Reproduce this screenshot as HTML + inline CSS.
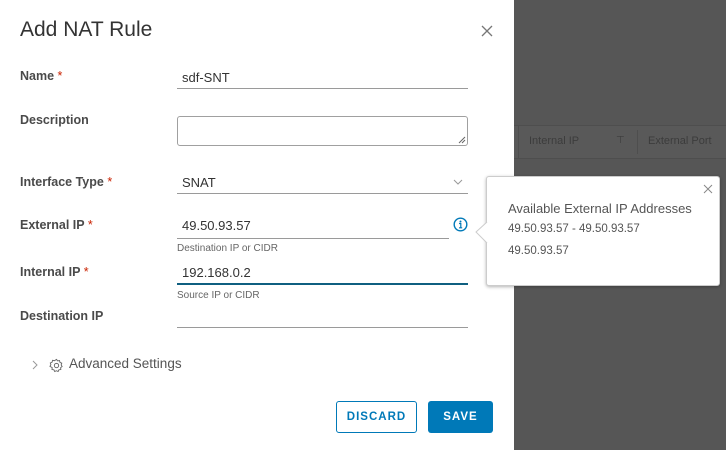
<!DOCTYPE html>
<html><head><style>
*{margin:0;padding:0;box-sizing:border-box}
body{width:726px;height:450px;overflow:hidden;position:relative;background:#565656;font-family:"Liberation Sans",sans-serif;color:#333}
.modal{position:absolute;left:0;top:0;width:514px;height:450px;background:#fff}
.abs{position:absolute}
.lbl{position:absolute;left:20px;font-size:12.5px;font-weight:bold;color:#4a4a4a}
.req{color:#c92100;font-weight:normal}
.val{position:absolute;left:182px;font-size:13px;color:#333}
.line{position:absolute;left:177px;width:291px;height:1px;background:#9a9a9a}
.help{position:absolute;left:177px;font-size:10px;color:#666}
</style></head><body>
<div class="abs" style="left:514px;top:125px;width:212px;height:34px;background:#595959;border-top:1px solid #4e4e4e;border-bottom:1px solid #4e4e4e"></div>
<div class="abs" style="left:518px;top:126px;width:1px;height:32px;background:#4e4e4e"></div>
<div class="abs" style="left:637px;top:130px;width:1px;height:24px;background:#4e4e4e"></div>
<div class="abs" style="left:529px;top:135px;font-size:11px;color:#3c3c3c">Internal IP</div>
<div class="abs" style="left:616px;top:135px;font-size:10px;color:#3c3c3c">⊤</div>
<div class="abs" style="left:648px;top:135px;font-size:11px;color:#3c3c3c">External Port</div>

<div class="modal">
<div class="abs" style="left:20px;top:18px;font-size:21px;color:#333">Add NAT Rule</div>
<svg class="abs" style="left:480px;top:24px" width="14" height="14"><path d="M2 2L12 12M12 2L2 12" stroke="#777" stroke-width="1.3"/></svg>

<div class="lbl" style="top:69px">Name <span class="req">*</span></div>
<div class="val" style="top:70px">sdf-SNT</div>
<div class="line" style="top:88px"></div>

<div class="lbl" style="top:113px">Description</div>
<div class="abs" style="left:177px;top:116px;width:291px;height:30px;border:1px solid #a0a0a0;border-radius:3px"></div>
<svg class="abs" style="left:458px;top:136px" width="8" height="8"><path d="M1 7L7 1M4 7L7 4" stroke="#666" stroke-width="1"/></svg>

<div class="lbl" style="top:175px">Interface Type <span class="req">*</span></div>
<div class="val" style="top:175px">SNAT</div>
<svg class="abs" style="left:453px;top:179px" width="10" height="6"><path d="M1 1L5 5L9 1" stroke="#999" fill="none"/></svg>
<div class="line" style="top:193px"></div>

<div class="lbl" style="top:218px">External IP <span class="req">*</span></div>
<div class="val" style="top:218px">49.50.93.57</div>
<div class="line" style="top:238px;width:272px"></div>
<div class="help" style="top:243px">Destination IP or CIDR</div>
<svg class="abs" style="left:453px;top:217px" width="15" height="15"><circle cx="7.5" cy="7.5" r="6.3" fill="none" stroke="#0079b8" stroke-width="1.4"/><circle cx="7.5" cy="4.5" r="1" fill="#0079b8"/><path d="M6 6.5H7.8V10.5M6 10.8H9.2" stroke="#0079b8" stroke-width="1.2" fill="none"/></svg>

<div class="lbl" style="top:265px">Internal IP <span class="req">*</span></div>
<div class="val" style="top:265px">192.168.0.2</div>
<div class="line" style="top:283px;height:2px;background:#0f5f80"></div>
<div class="help" style="top:290px">Source IP or CIDR</div>

<div class="lbl" style="top:309px">Destination IP</div>
<div class="line" style="top:327px"></div>

<svg class="abs" style="left:31px;top:360px" width="8" height="10"><path d="M2 1L6 5L2 9" stroke="#999" fill="none"/></svg>
<svg class="abs" style="left:49px;top:358px" width="15" height="15" viewBox="0 0 16 16"><path d="M8 1.5l1.2 1.6 2-.4.5 2 1.9.8-.6 1.9 1 1.7-1.6 1.2.2 2-2 .3-.9 1.8-1.8-.8-1.8.8-.9-1.8-2-.3.2-2L1 8.9l1-1.7-.6-1.9 1.9-.8.5-2 2 .4z" fill="none" stroke="#666" stroke-width="1"/><circle cx="8" cy="8" r="2.3" fill="none" stroke="#666"/></svg>
<div class="abs" style="left:69px;top:356px;font-size:13.5px;color:#555">Advanced Settings</div>

<div class="abs" style="left:336px;top:401px;width:81px;height:32px;border:1px solid #0079b8;border-radius:3px;color:#0079b8;font-size:11.5px;font-weight:bold;letter-spacing:1px;text-align:center;line-height:30px">DISCARD</div>
<div class="abs" style="left:428px;top:401px;width:65px;height:32px;background:#0079b8;border-radius:3px;color:#fff;font-size:11.5px;font-weight:bold;letter-spacing:1px;text-align:center;line-height:32px">SAVE</div>
</div>

<div class="abs" style="left:486px;top:176px;width:234px;height:110px;background:#fff;border:1px solid #ccc;border-radius:3px;box-shadow:0 1px 3px rgba(0,0,0,.3)"></div>
<svg class="abs" style="left:475px;top:222px" width="13" height="22"><path d="M13 0L12 0L1 10L12 21L13 21Z" fill="#fff"/><path d="M12 0L1 10L12 21" fill="none" stroke="#ccc"/></svg>
<svg class="abs" style="left:703px;top:184px" width="10" height="10"><path d="M1 1L9 9M9 1L1 9" stroke="#888" stroke-width="1"/></svg>
<div class="abs" style="left:508px;top:201px;font-size:13px;color:#555">Available External IP Addresses</div>
<div class="abs" style="left:508px;top:223px;font-size:11.5px;color:#555">49.50.93.57 - 49.50.93.57</div>
<div class="abs" style="left:508px;top:245px;font-size:11.5px;color:#555">49.50.93.57</div>
</body></html>
